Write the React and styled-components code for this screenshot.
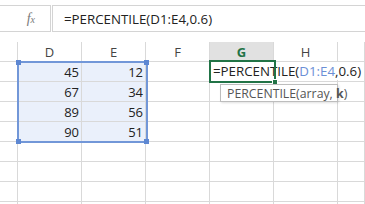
import React from "react";
import styled, { createGlobalStyle } from "styled-components";

const Global = createGlobalStyle`
  html, body { margin: 0; padding: 0; background: #fff; }
  body { font-family: "Open Sans", "Noto Sans", sans-serif; }
  * { box-sizing: border-box; }
`;

const Page = styled.div`
  width: 365px;
  height: 204px;
  overflow: hidden;
`;

const FormulaBar = styled.div`
  display: flex;
  padding-top: 5px;
  height: 42px;
`;

const FxBox = styled.div`
  width: 51px;
  height: 27px;
  border: 1px solid #d4d4d4;
  border-left: none;
  display: flex;
  align-items: center;
  justify-content: flex-end;
  padding-right: 15px;
  font-family: "Liberation Serif", serif;
  font-style: italic;
  color: #7a7a7a;
  font-size: 14px;
`;

const FxSub = styled.span`
  font-size: 10px;
  position: relative;
  top: 1px;
`;

const FormulaInput = styled.div`
  flex: 1;
  height: 27px;
  margin-left: 1px;
  margin-right: -4px;
  border: 1px solid #d4d4d4;
  display: flex;
  align-items: center;
  padding-left: 11px;
  font-size: 13.3px;
  color: #222;
  white-space: nowrap;
`;

const Sheet = styled.div`
  position: relative;
  display: grid;
  grid-template-columns: 18px repeat(5, 64px) 1fr;
  grid-template-rows: 20px repeat(8, 20px);
`;

const Cell = styled.div`
  position: relative;
  border-right: 1px solid #d9d9d9;
  border-bottom: 1px solid #d9d9d9;
  background: ${(p) => (p.$sel ? "#eaf0fb" : "#fff")};
  font-size: 13px;
  color: #222;
  display: flex;
  align-items: center;
  justify-content: ${(p) => (p.$left ? "flex-start" : "flex-end")};
  padding-right: 2px;
  white-space: nowrap;
  overflow: visible;
`;

const Head = styled.div`
  border-right: 1px solid #d9d9d9;
  border-bottom: ${(p) => (p.$active ? "2px solid #217346" : "1px solid #d9d9d9")};
  background: ${(p) => (p.$active ? "#e1e1e1" : "#fff")};
  color: ${(p) => (p.$active ? "#217346" : "#444")};
  font-weight: ${(p) => (p.$active ? 700 : 400)};
  font-size: 13px;
  display: flex;
  align-items: center;
  justify-content: center;
  padding-top: ${(p) => (p.$active ? "1px" : "0")};
`;

const OverflowText = styled.span`
  position: absolute;
  left: 2px;
  top: 0;
  bottom: 1px;
  z-index: 2;
  display: flex;
  align-items: center;
  background: #fff;
  padding-left: 1px;
  padding-right: 2px;
  font-size: 13.3px;
  color: #222;
`;

const Ref = styled.span`
  color: #6b8fd6;
`;

const Selection = styled.div`
  position: absolute;
  left: 17px;
  top: 19px;
  width: 131px;
  height: 82px;
  border: 2px solid #7297d8;
  pointer-events: none;
`;

const Handle = styled.div`
  position: absolute;
  width: 5px;
  height: 5px;
  background: #5d87d2;
  ${(p) => (p.$top ? "top: -3px;" : "bottom: -3px;")}
  ${(p) => (p.$left ? "left: -3px;" : "right: -3px;")}
`;

const ActiveCell = styled.div`
  position: absolute;
  left: 209px;
  top: 18px;
  width: 67px;
  height: 23px;
  border: 2px solid #217346;
  z-index: 3;
  pointer-events: none;
`;

const FillHandle = styled.div`
  position: absolute;
  right: -4px;
  bottom: -4px;
  width: 6px;
  height: 6px;
  background: #217346;
  border: 1px solid #fff;
`;

const Tooltip = styled.div`
  position: absolute;
  left: 220px;
  top: 42px;
  width: 118px;
  height: 18px;
  border: 1px solid #bdbdbd;
  background: #fff;
  box-shadow: 1px 1px 2px rgba(0, 0, 0, 0.12);
  font-size: 12.3px;
  color: #555;
  display: flex;
  align-items: center;
  padding-left: 6px;
  white-space: nowrap;
  z-index: 4;
`;

const cols = ["", "D", "E", "F", "G", "H", ""];
const data = [
  [45, 12],
  [67, 34],
  [89, 56],
  [90, 51],
];

export default function App() {
  const rows = [];
  for (let r = 0; r < 8; r++) {
    const vals = data[r];
    rows.push(
      <React.Fragment key={r}>
        <Cell />
        <Cell $sel={!!vals}>{vals ? vals[0] : null}</Cell>
        <Cell $sel={!!vals}>{vals ? vals[1] : null}</Cell>
        <Cell />
        <Cell $left>
          {r === 0 ? (
            <OverflowText>
              =PERCENTILE(<Ref>D1:E4</Ref>,0.6)
            </OverflowText>
          ) : null}
        </Cell>
        <Cell />
        <Cell />
      </React.Fragment>
    );
  }
  return (
    <Page>
      <Global />
      <FormulaBar>
        <FxBox>
          f<FxSub>x</FxSub>
        </FxBox>
        <FormulaInput>=PERCENTILE(D1:E4,0.6)</FormulaInput>
      </FormulaBar>
      <Sheet>
        {cols.map((c, i) => (
          <Head key={i} $active={c === "G"}>
            {c}
          </Head>
        ))}
        {rows}
        <Selection>
          <Handle $top $left />
          <Handle $top />
          <Handle $left />
          <Handle />
        </Selection>
        <ActiveCell>
          <FillHandle />
        </ActiveCell>
        <Tooltip>
          PERCENTILE(array,&nbsp;<b>k</b>)
        </Tooltip>
      </Sheet>
    </Page>
  );
}
